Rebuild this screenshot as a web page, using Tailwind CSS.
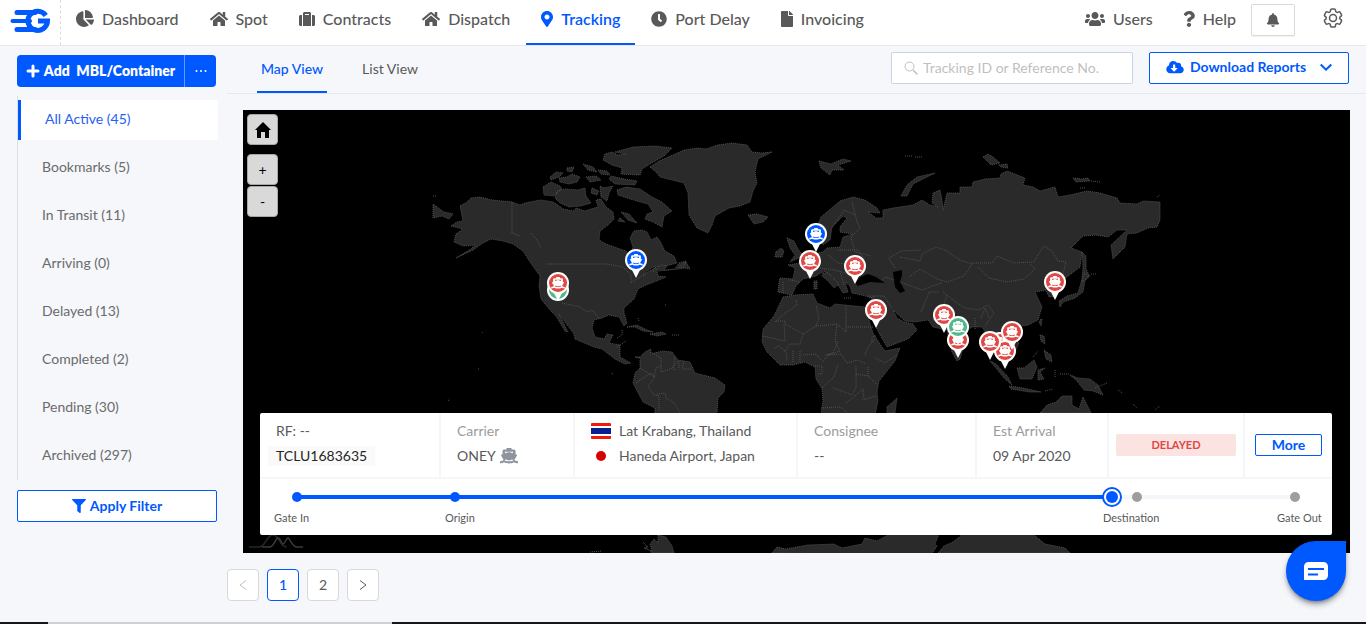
<!DOCTYPE html>
<html lang="en">
<head>
    <meta charset="UTF-8">
    <meta name="viewport" content="width=device-width, initial-scale=1.0">
    <script src="https://cdn.jsdelivr.net/npm/@tailwindcss/browser@4"></script>
    <title>Tracking</title>
</head>
<body class="bg-[#f5f7fb] font-['Lato',sans-serif] text-[#595959]">
    <!-- Shared icons -->
    <svg class="hidden">
        <symbol id="home" viewBox="0 0 576 512"><path d="M280.37 148.26L96 300.11V464a16 16 0 0 0 16 16l112.06-.29a16 16 0 0 0 15.92-16V368a16 16 0 0 1 16-16h64a16 16 0 0 1 16 16v95.64a16 16 0 0 0 16 16.05L464 480a16 16 0 0 0 16-16V300L295.67 148.26a12.19 12.19 0 0 0-15.3 0zM571.6 251.47L488 182.56V44.05a12 12 0 0 0-12-12h-56a12 12 0 0 0-12 12v72.61L318.47 43a48 48 0 0 0-61 0L4.34 251.47a12 12 0 0 0-1.6 16.9l25.5 31A12 12 0 0 0 45.15 301l235.22-193.74a12.19 12.19 0 0 1 15.3 0L530.9 301a12 12 0 0 0 16.9-1.6l25.5-31a12 12 0 0 0-1.7-16.93z"/></symbol>
        <symbol id="ship" viewBox="0 0 18 16"><path fill-rule="evenodd" d="M6.500 0h5v1.500H14A1.500 1.500 0 0 1 15.500 3v3.200l1 .4c.5.2.6.7.3 1.200l-2.600 4.400c-.9 0-1.600-.4-2.200-1-1.500 1.600-4.500 1.600-6 0-.6.6-1.300 1-2.200 1L1.200 7.800c-.3-.5-.2-1 .3-1.200l1-.4V3A1.500 1.500 0 0 1 4 1.500h2.500zM5 3.800v1.500l4-1.200 4 1.200V3.800z"/><path d="M0 13.200c1.800 0 3-.5 4-1.400.8.9 1.900 1.400 3 1.400h4c1.100 0 2.200-.5 3-1.400 1 .9 2.200 1.400 4 1.400v2c-1.600 0-3-.4-4-1-2.800 1.600-7.200 1.600-10 0-1 .6-2.400 1-4 1z"/></symbol>
        <symbol id="pin" viewBox="-12 -12 24 32" overflow="visible">
            <path fill="#fff" d="M-5 8L5 8L0 18z"/>
            <circle r="11" fill="#fff"/>
            <circle r="9" fill="currentColor"/>
            <use href="#ship" x="-7" y="-6" width="14" height="12" fill="#fff"/>
        </symbol>
    </svg>

    <div class="min-h-screen flex flex-col">
        <!-- Header -->
        <header class="h-[46px] flex bg-white border-b border-[#e6e8ec]">
            <a href="#" aria-label="Home" class="w-[61px] shrink-0 flex items-center pl-2.5 pb-1 border-r border-dashed border-[#dcdcdc]">
                <svg class="w-10 h-[26px]" viewBox="0 0 40 26" fill="none" stroke="#0058ff" stroke-linecap="round">
                    <path stroke-width="5" d="M7 4.500h18M7 21.500h18"/>
                    <path stroke-width="4" d="M2.500 13H20"/>
                    <path stroke-width="5" stroke-linecap="butt" d="M35.800 7.500A9.800 9.500 0 1 0 37.500 13H28"/>
                </svg>
            </a>
            <nav class="flex-1 flex justify-between text-base font-medium leading-10">
                <ul class="flex gap-px">
                    <li><a href="#" class="h-[45px] px-[15px] flex items-center gap-2 pb-2"><svg class="w-[18px] h-[17px]" viewBox="0 0 544 512" fill="currentColor"><path d="M527.79 288H290.5l158.03 158.03c6.04 6.04 15.98 6.53 22.19.68 38.7-36.46 65.32-85.61 73.13-140.86 1.34-9.46-6.51-17.85-16.06-17.85zm-15.83-64.8C503.72 103.74 408.26 8.28 288.8.04 279.68-.59 272 7.1 272 16.24V240h223.77c9.14 0 16.82-7.68 16.19-16.8zM224 288V50.71c0-9.55-8.39-17.4-17.84-16.06C86.99 51.49-4.1 155.6.14 280.37 4.5 408.51 114.83 513.59 243.03 511.98c50.4-.63 96.97-16.87 135.26-44.03 7.9-5.6 8.42-17.23 1.57-24.08L224 288z"/></svg>Dashboard</a></li>
                    <li><a href="#" class="h-[45px] px-[15px] flex items-center gap-2 pb-2"><svg class="w-[18px] h-4" fill="currentColor"><use href="#home"/></svg>Spot</a></li>
                    <li><a href="#" class="h-[45px] px-[15px] flex items-center gap-2 pb-2"><svg class="w-4 h-4" viewBox="0 0 512 512" fill="currentColor"><path d="M128 480h256V80c0-26.5-21.5-48-48-48H176c-26.5 0-48 21.5-48 48v400zm64-384h128v32H192V96zm320 80v256c0 26.5-21.5 48-48 48h-48V128h48c26.5 0 48 21.5 48 48zM96 480H48c-26.500 0-48-21.500-48-48V176c0-26.500 21.500-48 48-48h48v352z"/></svg>Contracts</a></li>
                    <li><a href="#" class="h-[45px] px-[15px] flex items-center gap-2 pb-2"><svg class="w-[18px] h-4" fill="currentColor"><use href="#home"/></svg>Dispatch</a></li>
                    <li><a href="#" class="h-[45px] px-[15px] flex items-center gap-2 pb-1.5 text-[#0058ff] font-semibold border-b-2 border-[#0058ff]"><svg class="w-3 h-4" viewBox="0 0 384 512" fill="currentColor"><path d="M172.268 501.67C26.97 291.031 0 269.413 0 192 0 85.961 85.961 0 192 0s192 85.961 192 192c0 77.413-26.97 99.031-172.268 309.67-9.535 13.774-29.93 13.773-39.464 0zM192 272c44.183 0 80-35.817 80-80s-35.817-80-80-80-80 35.817-80 80 35.817 80 80 80z"/></svg>Tracking</a></li>
                    <li><a href="#" class="h-[45px] px-[15px] flex items-center gap-2 pb-2"><svg class="w-4 h-4" viewBox="0 0 512 512" fill="currentColor"><path d="M256,8C119,8,8,119,8,256S119,504,256,504,504,393,504,256,393,8,256,8Zm92.49,313h0l-20,25a16,16,0,0,1-22.49,2.5h0l-67-49.72a40,40,0,0,1-15-31.23V112a16,16,0,0,1,16-16h32a16,16,0,0,1,16,16V256l58,42.5A16,16,0,0,1,348.49,321Z"/></svg>Port Delay</a></li>
                    <li><a href="#" class="h-[45px] px-[15px] flex items-center gap-2 pb-2"><svg class="w-3 h-4" viewBox="0 0 384 512" fill="currentColor"><path d="M224 136V0H24C10.7 0 0 10.7 0 24v464c0 13.3 10.7 24 24 24h336c13.3 0 24-10.7 24-24V160H248c-13.2 0-24-10.8-24-24zm160-14.1v6.1H256V0h6.1c6.4 0 12.5 2.5 17 7l97.9 98c4.5 4.5 7 10.6 7 16.9z"/></svg>Invoicing</a></li>
                </ul>
                <div class="flex items-center pb-1.5 pr-[22px]">
                    <a href="#" class="flex items-center gap-2 pb-0.5 pr-[30px]"><svg class="w-5 h-4" viewBox="0 0 640 512" fill="currentColor"><path d="M96 224c35.3 0 64-28.7 64-64s-28.7-64-64-64-64 28.7-64 64 28.7 64 64 64zm448 0c35.3 0 64-28.7 64-64s-28.7-64-64-64-64 28.7-64 64 28.7 64 64 64zm32 32h-64c-17.6 0-33.5 7.1-45.1 18.6 40.3 22.1 68.9 62 75.1 109.4h66c17.7 0 32-14.3 32-32v-32c0-35.3-28.7-64-64-64zm-256 0c61.9 0 112-50.1 112-112S381.9 32 320 32 208 82.1 208 144s50.1 112 112 112zm76.8 32h-8.3c-20.8 10-43.9 16-68.5 16s-47.6-6-68.5-16h-8.3C179.6 288 128 339.6 128 403.2V432c0 26.500 21.500 48 48 48h288c26.500 0 48-21.500 48-48v-28.800c0-63.600-51.600-115.200-115.200-115.200zm-223.700-13.400C161.500 263.100 145.600 256 128 256H64c-35.300 0-64 28.700-64 64v32c0 17.700 14.300 32 32 32h65.900c6.300-47.400 34.900-87.300 75.200-109.400z"/></svg>Users</a>
                    <a href="#" class="flex items-center gap-2 pb-0.5 pr-[15px]"><svg class="w-3 h-4" viewBox="0 0 384 512" fill="currentColor"><path d="M202.021 0C122.202 0 70.503 32.703 29.914 91.026c-7.363 10.58-5.093 25.086 5.178 32.874l43.138 32.709c10.373 7.865 25.132 6.026 33.253-4.148 25.049-31.381 43.63-49.449 82.757-49.449 30.764 0 68.816 19.799 68.816 49.631 0 22.552-18.617 34.134-48.993 51.164-35.423 19.86-82.299 44.576-82.299 106.405V320c0 13.255 10.745 24 24 24h72.471c13.255 0 24-10.745 24-24v-5.773c0-42.86 125.268-44.645 125.268-160.627C377.504 66.256 286.902 0 202.021 0zM192 373.459c-38.196 0-69.271 31.075-69.271 69.271 0 38.195 31.075 69.27 69.271 69.27s69.271-31.075 69.271-69.271-31.075-69.27-69.271-69.27z"/></svg>Help</a>
                    <button aria-label="Notifications" class="w-11 h-8 flex items-center justify-center border border-[#d9d9d9] rounded-xs shadow-2xs"><svg class="w-3.5 h-3.5" viewBox="0 0 448 512" fill="currentColor"><path d="M224 512c35.32 0 63.97-28.65 63.97-64H160.03c0 35.35 28.65 64 63.97 64zm215.39-149.71c-19.32-20.76-55.47-51.99-55.47-154.29 0-77.7-54.48-139.9-127.94-155.16V32c0-17.67-14.32-32-31.98-32s-31.98 14.33-31.98 32v20.84C118.56 68.1 64.08 130.3 64.08 208c0 102.3-36.15 133.53-55.47 154.29-6 6.45-8.66 14.16-8.61 21.71.11 16.4 12.98 32 32.1 32h383.8c19.12 0 32-15.6 32.1-32 .05-7.55-2.61-15.27-8.61-21.71z"/></svg></button>
                    <button aria-label="Settings" class="ml-[27px] mb-1"><svg class="w-[22px] h-[22px]" viewBox="1 1 22 22" fill="none" stroke="currentColor" stroke-width="1.5"><path d="M9.594 3.94c.09-.542.56-.94 1.11-.94h2.593c.55 0 1.02.398 1.11.94l.213 1.281c.063.374.313.686.645.87.074.04.147.083.22.127.325.196.72.257 1.075.124l1.217-.456a1.125 1.125 0 0 1 1.37.49l1.296 2.247a1.125 1.125 0 0 1-.26 1.431l-1.003.827c-.293.241-.438.613-.43.992a7.723 7.723 0 0 1 0 .255c-.008.378.137.75.43.991l1.004.827c.424.35.534.955.26 1.43l-1.298 2.247a1.125 1.125 0 0 1-1.369.491l-1.217-.456c-.355-.133-.75-.072-1.076.124a6.47 6.47 0 0 1-.22.128c-.331.183-.581.495-.644.869l-.213 1.281c-.09.543-.56.94-1.11.94h-2.594c-.55 0-1.019-.398-1.11-.94l-.213-1.281c-.062-.374-.312-.686-.644-.87a6.52 6.52 0 0 1-.22-.127c-.325-.196-.72-.257-1.076-.124l-1.217.456a1.125 1.125 0 0 1-1.369-.49l-1.297-2.247a1.125 1.125 0 0 1 .26-1.431l1.004-.827c.292-.24.437-.613.43-.991a6.932 6.932 0 0 1 0-.255c.007-.38-.138-.751-.43-.992l-1.004-.827a1.125 1.125 0 0 1-.26-1.43l1.297-2.247a1.125 1.125 0 0 1 1.37-.491l1.216.456c.356.133.751.072 1.076-.124.072-.044.146-.086.22-.128.332-.183.582-.495.644-.869l.214-1.28Z"/><circle cx="12" cy="12" r="3.500"/></svg></button>
                </div>
            </nav>
        </header>

        <div class="flex">
            <!-- Sidebar -->
            <aside class="w-[227px] shrink-0 pl-[17px] pt-[9px]">
                <div class="w-[199px] h-8 flex rounded-sm bg-[#0058ff] text-white text-sm font-extrabold">
                    <button class="flex-1 flex items-center justify-center gap-1"><svg class="w-3.5 h-3.5" viewBox="0 0 14 14" stroke="currentColor" stroke-width="3" stroke-linecap="round"><path d="M7 2v10M2 7h10"/></svg><span class="whitespace-pre">Add  MBL/Container</span></button>
                    <button aria-label="More actions" class="w-8 border-l border-white/40 flex items-center justify-center"><svg class="w-3 h-1" viewBox="0 0 12 4" fill="currentColor"><circle cx="1.500" cy="2" r="1"/><circle cx="6" cy="2" r="1"/><circle cx="10.500" cy="2" r="1"/></svg></button>
                </div>
                <ul class="mt-[9px] pt-1 w-[201px] border-l border-[#dcdfe4] flex flex-col gap-2 text-sm leading-[38px] text-[#6b6b6b]">
                    <li><a href="#" class="block h-10 pl-6 border-l-3 border-[#0058ff] bg-white text-[#2660f5]">All Active (45)</a></li>
                    <li><a href="#" class="block h-10 pl-6">Bookmarks (5)</a></li>
                    <li><a href="#" class="block h-10 pl-6">In Transit (11)</a></li>
                    <li><a href="#" class="block h-10 pl-6">Arriving (0)</a></li>
                    <li><a href="#" class="block h-10 pl-6">Delayed (13)</a></li>
                    <li><a href="#" class="block h-10 pl-6">Completed (2)</a></li>
                    <li><a href="#" class="block h-10 pl-6">Pending (30)</a></li>
                    <li><a href="#" class="block h-11 pl-6">Archived (297)</a></li>
                </ul>
                <button class="mt-2.5 w-[200px] h-8 flex items-center justify-center gap-1 border border-[#0058ff] rounded-xs bg-white text-[#0058ff] text-sm font-bold"><svg class="w-3.5 h-3.5" viewBox="0 0 512 512" fill="currentColor"><path d="M487.976 0H24.028C2.71 0-8.047 25.866 7.058 40.971L192 225.941V432c0 7.831 3.821 15.17 10.237 19.662l80 55.98C298.02 518.69 320 507.493 320 487.98V225.941l184.947-184.97C520.021 25.896 509.338 0 487.976 0z"/></svg>Apply Filter</button>
            </aside>

            <!-- Main Content -->
            <main class="flex-1 min-w-0">
                <div class="h-12 flex justify-between border-b border-[#e6e8ec]">
                    <div class="flex pl-[30px] gap-[31px] text-sm leading-[46px]">
                        <a href="#" class="h-[47px] px-1 border-b-2 border-[#0058ff] text-[#0058ff] font-medium">Map View</a>
                        <a href="#" class="px-1">List View</a>
                    </div>
                    <div class="flex gap-4 pt-1.5 pr-[17px]">
                        <label class="w-[242px] h-8 flex items-center gap-[5px] pl-3 bg-white border border-[#c5d5ea] rounded-xs">
                            <svg class="w-3.5 h-3.5 text-[#bfbfbf]" viewBox="0 0 14 14" fill="none" stroke="currentColor"><circle cx="5.500" cy="5.500" r="4.500"/><path stroke-width="1.500" d="M9 9l4.500 4.500"/></svg>
                            <input type="text" aria-label="Search" placeholder="Tracking ID or Reference No." class="flex-1 min-w-0 text-sm outline-none placeholder:text-[#bfbfbf]">
                        </label>
                        <button class="w-[200px] h-8 pb-0.5 flex items-center justify-center bg-white border border-[#0058ff] rounded-xs text-[#0058ff] text-sm font-bold"><svg class="w-[18px] h-3.5 mr-1.5" viewBox="0 0 640 512" fill="currentColor"><path d="M537.6 226.6c4.1-10.7 6.4-22.4 6.4-34.6 0-53-43-96-96-96-19.7 0-38.1 6-53.3 16.2C367 64.2 315.3 32 256 32c-88.4 0-160 71.6-160 160 0 2.7.1 5.4.2 8.1C40.2 219.8 0 273.2 0 336c0 79.5 64.5 144 144 144h368c70.7 0 128-57.3 128-128 0-61.9-44-113.6-102.4-125.4zm-132.9 88.7L299.3 420.7c-6.2 6.2-16.4 6.2-22.6 0L171.3 315.3c-10.1-10.1-2.9-27.3 11.3-27.3H248V176c0-8.800 7.200-16 16-16h48c8.800 0 16 7.200 16 16v112h65.400c14.200 0 21.400 17.200 11.300 27.300z"/></svg>Download Reports<svg class="w-3 h-3 ml-3.5" viewBox="0 0 12 12" fill="none" stroke="currentColor" stroke-width="2"><path d="M.7 3.500L6 8.700l5.300-5.200"/></svg></button>
                    </div>
                </div>

                <!-- Map -->
                <section class="relative mt-4 ml-4 mr-4 bg-black overflow-hidden">
                    <svg class="block w-full" viewBox="243 110 1107 443">
                        <g fill="#2a2a2a" stroke="#515151" stroke-width="1" stroke-dasharray="1 1">
                            <!-- North America -->
                            <path d="M460 206l7-4 4-4 9-1 12 3 20 2 8 3 5-2 10-2 6-1 12 2 5 3 5 4 11 2 2-3 9 3 6-2 7-2-2-7 5-1 5 8 7 5 1 7-6 6-8 6-1 9 7 4 14 5 6 2 2 5 3-2 2-7-3-9 4-7 8-1 5 2 4 8 6-3 3 4 5 10 9 5 3 7-11 3-13 1-7 5-3 4 13-9 2 9 8 1-12 5-8 3-8 4-4 10-10 9v5l3 10-3 3-5-9-10-2-7 3-8 2-2 8 3 9 9 2 3-5 6 1-4 8 11 2v12l7 4 4 2-6 1-10-5-13-10-8-2-19-8-1-5-15-20 9 18-3-1-9-15-6-6-9-11-2-13 1-10-10-14-7-11-10-7-10-3-12-2-8 4-10 7-17 8 15-9 4-4-12 1-9-4 2-8 7-5-12-3 6-4 6-1z"/>
                            <path d="M433 204l11 8 9 2-4 5-7-3-9 2zM433 196h4M531 233l6 7 4 8M653 272l8-7 6 1-3 4 11-1 4-6 7-2-3 8M686 262l4 7-11-2z"/>
                            <path d="M627 327l10-2 10 5 6 2-10-1-8-4zM650 334l12-2 4 2-9 2zM672 335h8M666 338M482 332l1 1M478 369l1 0M612 373l1 2M448 400l2 1M665 305l1 0M638 318l1 3"/>
                            <!-- Arctic islands -->
                            <path d="M615 152l18-5 22-1 17 2-8 8-14 8-8 5-2 6-19-1 1-6-10-3-9-5 2-6 7-2 6 3 8-1z"/>
                            <path d="M609 179l2-3 13 3 13 2-2 4-20-1zM617 190l9-3 14 2 12 8 10 5 10 9-8 5-2 11-9-5-8-3 2-5 6-2-5-8-11-3-13-4-6-2zM600 186l4 2 9-2-4 7-2 8-6-4zM592 188l7 3-2 4-6-2zM543 187l8-5 9 4 2 3-8 7-10-1zM557 191l8-2 13 1 7-2 1 8 5 7-10 3-12 1-9-4-5-5zM559 178l8-1 5-3 8 3-3 5-8 2-9-2zM550 177l6-5 7 1-4 4-8 3zM586 177l10-1 5 4-11 2zM598 170l9 1 3 4-9-1zM583 164l10 3 4 5-9-2zM567 168l7-1-2 5-5-1zM621 212l8 2 8 9-9-3zM620 218l5 4-7-1z"/>
                            <!-- Greenland and Iceland -->
                            <path d="M650 167l9-6 14-6 11-5 14-2 8 1 12-4 14-2 15 2 5 7 10 1 10-1-14 7-3 13 2 11-4 8-3 11-10 4-11 2-14 8-3 9-4 8-11-5-8-13-1-22-4-10-12-3-12-3-3-4zM748 215l9-1 11 3-5 5-9 2z"/>
                            <!-- South America -->
                            <path d="M635 357l5 0 5-5 6-3-1 5 13-3 9 1 6 8 12 2 5 11 20 5 10 7-1 7-6 6-1 16h-62v-6l-12-6-10-19 2-10 5-5v-10z"/>
                            <path fill="none" d="M651 352l10 6v14l10-3 7-8M640 368l14 9 2-9 5-2M636 383l15-10 4 4-7 9 6 9 5 1 0 14M657 394l8-1 1 5 8 5 6 10M684 361l-2 8 9 0M679 361l0 8M675 357l-2 12 3 1"/>
                            <!-- Africa -->
                            <path d="M783 297l12-2 18-1 4 9 13 5 5-4 10 1 20 2 3 10 5 16 9 14 3 4 15-3-5 13-16 20-2 11 1 9-3 14h-54l2-14-1-12-6-10-1-12-10-5-12 3-13 0-13-13-5-10 1-13 11-13zM887 407l10-9-2 15h-8z"/>
                            <path fill="none" d="M796 300l1 5-13 9-9 8M776 321h9l0 3 18 10 13-8 3-8-3-13M763 336l22 5-1-17M803 334l-3 10-10 0-5 7M816 326l12-1 9-1 9 8 0-27M846 327h27M837 325l-2 16 5 10-12 4-6 8M828 355l13-1 6 9 11-3 8 4M803 355l13-1 5 6M800 362l0-11M793 362l0-12M774 348l5-2 7 6 1 9M822 388l12-11 4-12M833 388l6 2 13 5 4-7v-14M856 366l0 10M856 374l12 2 8 8M872 342l0-5 4-1M865 355l3-8 7-8M875 358l10 5 12-8M868 376v-10M846 403l9-7 8-7 1 10M821 408l20-1 6 6M862 400l14-4M838 341l-5 12-8 2M815 366h7v8h-5"/>
                            <!-- Europe and Asia -->
                            <path d="M778 292L779 283 780 278 793 279 795 268 788 265 800 263 805 258 813 254 823 252 827 248 840 247 843 237 853 234 840 232 840 227 847 218 843 216 832 227 830 240 823 245 818 233 817 227 821 217 827 212 840 201 853 197 865 200 877 208 880 213 868 212 876 218 883 218 883 210 893 208 913 205 922 200 930 205 938 207 932 203 933 193 940 190 942 200 943 210 947 193 960 193 960 187 972 187 973 182 985 179 1000 178 1001 174 1007 171 1025 178 1023 185 1033 187 1040 191 1055 187 1058 197 1070 195 1087 191 1100 193 1117 198 1120 203 1137 204 1143 201 1160 202 1160 220 1157 227 1148 228 1137 233 1127 234 1125 247 1113 259 1111 245 1127 230 1117 230 1108 237 1096 235 1083 236 1071 248 1082 252 1080 267 1067 277 1052 286 1055 296 1049 297 1046 290 1035 292 1042 307 1038 320 1028 325 1016 327 1011 331 1019 343 1015 352 1007 350 1003 345 1000 352 1007 366 1001 360 996 345 988 337 982 327 972 327 963 333 964 345 960 359 957 361 952 352 947 330 933 327 928 320 915 322 905 321 893 310 897 318 904 322 913 324 917 330 908 339 887 347 880 335 868 310 872 298 862 295 852 293 850 286 845 282 848 292 843 293 838 285 833 277 824 271 816 276 803 279 796 286 792 295z"/>
                            <path d="M787 238l7 3 4 8 5 7-13 6 5-7-5-7zM776 252l5-4 3 3-2 6-7 0zM823 273l5 0 5 5 6 6-5 4-6-7-6-5zM814 281h3v8h-3zM844 298h7M869 298l5-1M819 161l12 3 12-5 8 2-13 4 6 5-12 0-2 5-9-7zM901 196l6-11 10-8 18-4-10 5-12 6-6 12zM905 156h7M915 157h7M983 157l5-3 5 3 7 6-9 2zM999 165l8-1 1 4-7-1zM1073 178l8 1 7-1 2 3-14 1zM1091 181l9 1M1080 188l5 0M1157 197l3-2"/>
                            <!-- Japan and South-East Asia -->
                            <path d="M1082 252l4 4 0 13 3 6-4 6-2 11-8 6-12 4-3 5-1-6 8-5 11-3 4-14 1-12zM1084 273l6 3-8 6zM1040 320l2-1-1 7-2-4zM990 361l6 3 12 13 4 8-8-7-8-10zM1009 386l14 2 18 4-12 0-18-3zM1017 368l7 0 10-8 3 7-5 12-12 0zM1038 370l7-2-5 4 4 7-6 1zM1040 335l4 1 1 8-4-3zM1044 350l7 5 1 7-6-3zM1070 375l8 3 12 1 8 6 5 10-10-4-9-1-7-9zM1033 357l5-6M958 356l2 3M1091 274l5 0"/>
                            <path d="M1040 413l7-8 9-3 6-6 10 0 0 9 7 4 4-12 4 8 4 8zM1045 391l8-2M1055 370v7M1060 374h9M1095 388l12-5M1118 390l4 3M1133 404l4 4M1155 410l5-4"/>
                            <path fill="none" d="M512 202v31l8 3M547 264h60l16 3 8 8 0 8 12-8 16-9M562 303l18 4 7 5 5-2 8 9M617 338l5-3v-6M617 347l9-6M900 257l20 4 2-7 14-7 11 4 13 9 12 4-8 12-17 6-10-3-17-10-11 8M972 263l20 0 5-7 17 7 20-1 5-9 5-7 8 5 6 10 8 1-3 12-10 4M978 267l11 11 18 4 17-3 11-10-5-5M900 282l22 8 10-4 10-3M943 292l10 8 12 8 14 2 9-5 6 8-9 13M921 312l8-20 10 0M933 320l9-10 5-15M855 215l-11-5-12 18M852 202l5 20 3 6-9 10 4 14 16 4M838 250l20 0 6 8-2 10M828 255l10 8 12 2M820 268l15 2 13 4 6-4M840 271l4 14M880 283l5-6 9 3M868 296l16 0 8 12M783 282l0 11M790 280l10 2M895 268l-6-10 12-7 20-1M975 318v12M981 318l4-10 4 10"/>
                        </g>
                        <!-- Inland seas -->
                        <path d="M855 283l5-6 8-3 8 3 9 6-15-1-12 4zM893 272l9-2 0 5-2 7 5 9-5 2-5-6z"/>
                        <!-- Southern edge -->
                        <g fill="#2a2a2a" stroke="#515151" stroke-dasharray="1 1">
                            <path d="M590 552l12-1M643 542l5 5-4 1 8 3-2-7 4-5 4 4 0-8 8 2 6 9 2 7h-23M772 553l5-6 9 2 22-4 26-1 8 4 20-4 3-6 12 3 15-8 47 1-4 10 2 2-6 9zM938 553l6-7 9-4 10-8h70l12 10 20 4 5 5z"/>
                        </g>
                        <g fill="none" stroke="#3a3a3a" stroke-width="1.500">
                            <path stroke="#262626" d="M249 547h10c7 0 7-12 14-12s6 12 14 12"/>
                            <path d="M262 547h7c6 0 6-9 9-9s3 6 5 6 3-6 5-6 4 9 9 9h6"/>
                        </g>
                        <!-- Vessels -->
                        <g>
                            <circle cx="558" cy="290" r="10" fill="#50b98a" stroke="#fff" stroke-width="2"/>
                            <use href="#pin" x="546" y="271" width="24" height="32" class="text-[#e04845]"/>
                            <use href="#pin" x="624" y="248" width="24" height="32" class="text-[#0058ff]"/>
                            <use href="#pin" x="804" y="222" width="24" height="32" class="text-[#0058ff]"/>
                            <use href="#pin" x="798" y="249" width="24" height="32" class="text-[#e04845]"/>
                            <use href="#pin" x="843" y="254" width="24" height="32" class="text-[#e04845]"/>
                            <use href="#pin" x="864" y="298" width="24" height="32" class="text-[#e04845]"/>
                            <use href="#pin" x="932" y="303" width="24" height="32" class="text-[#e04845]"/>
                            <use href="#pin" x="946" y="328" width="24" height="32" class="text-[#e04845]"/>
                            <use href="#pin" x="946" y="315" width="24" height="32" class="text-[#50b98a]"/>
                            <use href="#pin" x="988" y="331" width="24" height="32" class="text-[#e04845]"/>
                            <use href="#pin" x="993" y="339" width="24" height="32" class="text-[#e04845]"/>
                            <use href="#pin" x="1000" y="320" width="24" height="32" class="text-[#e04845]"/>
                            <use href="#pin" x="978" y="330" width="24" height="32" class="text-[#e04845]"/>
                            <use href="#pin" x="1043" y="270" width="24" height="32" class="text-[#e04845]"/>
                        </g>
                    </svg>

                    <!-- Map controls -->
                    <div class="absolute left-1 top-1 flex flex-col gap-px text-black text-sm">
                        <button aria-label="Reset map" class="size-[31px] mb-2 flex items-center justify-center rounded-sm border border-[#a8a8a8] bg-[#d9d9d9]"><svg class="w-4 h-4" viewBox="0 0 16 16"><path d="M8 0l8 8h-2v8h-4v-6H6v6H2V8H0z"/></svg></button>
                        <button aria-label="Zoom in" class="size-[31px] rounded-sm border border-[#a8a8a8] bg-[#d9d9d9]">+</button>
                        <button aria-label="Zoom out" class="size-[31px] rounded-sm border border-[#a8a8a8] bg-[#d9d9d9]">-</button>
                    </div>

                    <!-- Shipment card -->
                    <article class="absolute left-[17px] right-[18px] bottom-[18px] rounded-xs bg-white">
                        <div class="grid grid-cols-[181fr_134fr_223fr_179fr_132fr_136fr_87fr] h-[66px] border-b-2 border-[#f5f6fa] divide-x-2 divide-[#f5f6fa] text-sm leading-5">
                            <div class="pl-2 pt-2 flex flex-col items-start gap-[5px]">
                                <span class="px-2">RF: --</span>
                                <span class="px-2 bg-[#fafafa] text-[#262626]">TCLU1683635</span>
                            </div>
                            <div class="pl-4 pt-2 flex flex-col gap-[5px]">
                                <span class="text-[#9b9b9b]">Carrier</span>
                                <span class="flex items-center gap-1">ONEY <svg class="w-[18px] h-4" fill="#8f959e"><use href="#ship"/></svg></span>
                            </div>
                            <div class="pl-4 pt-2 flex flex-col gap-[5px]">
                                <span class="flex items-center gap-2"><svg class="w-5 h-4" viewBox="0 0 20 16"><rect width="20" height="16" rx="1" fill="#f1180c"/><path fill="#fff" d="M0 3h20v10H0z"/><path fill="#0a1f8f" d="M0 5h20v6H0z"/></svg>Lat Krabang, Thailand</span>
                                <span class="flex items-center gap-2"><svg class="w-5 h-4" viewBox="0 0 20 16"><circle cx="10" cy="8" r="5" fill="#d90000"/></svg>Haneda Airport, Japan</span>
                            </div>
                            <div class="pl-4 pt-2 flex flex-col gap-[5px]">
                                <span class="text-[#9b9b9b]">Consignee</span>
                                <span>--</span>
                            </div>
                            <div class="pl-4 pt-2 flex flex-col gap-[5px]">
                                <span class="text-[#9b9b9b]">Est Arrival</span>
                                <span>09 Apr 2020</span>
                            </div>
                            <div class="px-[7px] flex items-center">
                                <span class="w-full h-[22px] rounded-xs bg-[#fae3e1] text-center text-[11px] leading-[22px] font-bold text-[#e04845]">DELAYED</span>
                            </div>
                            <div class="px-2.5 flex items-center">
                                <button class="w-full h-[22px] rounded-xs border border-[#0058ff] text-[#0058ff] leading-5 font-bold">More</button>
                            </div>
                        </div>
                        <div class="pt-2 pb-2">
                            <!-- Progress line -->
                            <div class="relative h-5 mx-[37px]">
                                <div class="absolute inset-x-0 top-2 h-1 bg-[#f5f6fa]"></div>
                                <div class="absolute left-0 top-2 h-1 bg-[#0058ff]" style="width: 81.7%"></div>
                                <span class="absolute top-[5px] -ml-[5px] size-2.5 rounded-full bg-[#0058ff]" style="left: 0%"></span>
                                <span class="absolute top-[5px] -ml-[5px] size-2.5 rounded-full bg-[#0058ff]" style="left: 15.8%"></span>
                                <span class="absolute top-0 -ml-2.5 size-5 rounded-full border-2 border-[#0058ff] bg-white p-0.5" style="left: 81.7%"><span class="block size-full rounded-full bg-[#0058ff]"></span></span>
                                <span class="absolute top-[5px] -ml-[5px] size-2.5 rounded-full bg-[#9e9e9e]" style="left: 84.2%"></span>
                                <span class="absolute top-[5px] -ml-[5px] size-2.5 rounded-full bg-[#9e9e9e]" style="left: 100%"></span>
                            </div>
                            <div class="grid grid-cols-[171fr_658fr_174fr_55fr] pl-3.5 pt-0.5 text-[11px] leading-[18px]">
                                <span>Gate In</span>
                                <span>Origin</span>
                                <span>Destination</span>
                                <span>Gate Out</span>
                            </div>
                        </div>
                    </article>
                </section>

                <!-- Pagination -->
                <nav class="flex gap-2 mt-4 text-sm">
                    <button aria-label="Previous page" class="size-8 flex items-center justify-center rounded-sm border border-[#d9d9d9] bg-white text-[#bfbfbf]"><svg class="w-2 h-2.5" viewBox="0 0 8 10" fill="none" stroke="currentColor"><path d="M7 .5L1 5l6 4.500"/></svg></button>
                    <button class="size-8 rounded-sm border border-[#0058ff] bg-white text-[#0058ff] font-medium">1</button>
                    <button class="size-8 rounded-sm border border-[#d9d9d9] bg-white">2</button>
                    <button aria-label="Next page" class="size-8 flex items-center justify-center rounded-sm border border-[#d9d9d9] bg-white"><svg class="w-2 h-2.5" viewBox="0 0 8 10" fill="none" stroke="currentColor"><path d="M1 .5L7 5l-6 4.500"/></svg></button>
                </nav>
            </main>
        </div>

        <footer class="mt-auto h-0.5 flex bg-[#16171b]">
            <div class="ml-12 w-[344px] bg-[#d0d0d0]"></div>
        </footer>
    </div>

    <!-- Chat launcher -->
    <button aria-label="Open chat" class="fixed right-5 bottom-[23px] size-[60px] flex items-center justify-center rounded-full rounded-tr-lg bg-[#0058ff] shadow-md shadow-black/40">
        <svg class="w-6 h-5" viewBox="0 0 24 20" fill="none"><path fill="#fff" d="M4.500 1h15A4.500 4.500 0 0 1 24 5.500v9a4.500 4.500 0 0 1-4.500 4.500H0V5.500A4.500 4.500 0 0 1 4.500 1z"/><path stroke="#0058ff" stroke-width="2" d="M4 8h16M4 13.500h10"/></svg>
    </button>
</body>
</html>
